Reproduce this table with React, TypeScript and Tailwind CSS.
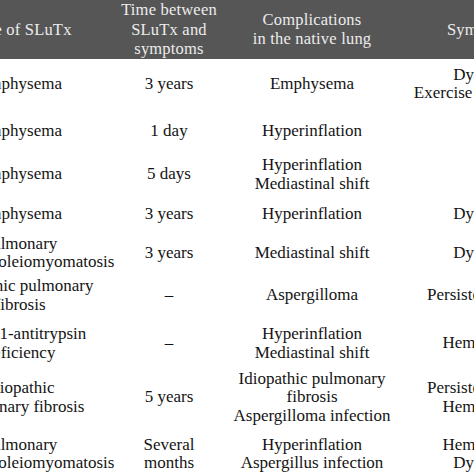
import React from "react";

type Row = { h: string; c: string[][] };

const rows: Row[] = [
  { h: "h-[50px]", c: [["Emphysema"], ["3 years"], ["Emphysema"], ["Dyspnea", "Exercise intolerance"]] },
  { h: "h-[44px]", c: [["Emphysema"], ["1 day"], ["Hyperinflation"], []] },
  { h: "h-[43px]", c: [["Emphysema"], ["5 days"], ["Hyperinflation", "Mediastinal shift"], []] },
  { h: "h-[37px]", c: [["Emphysema"], ["3 years"], ["Hyperinflation"], ["Dyspnea"]] },
  { h: "h-[40px]", c: [["Pulmonary", "lymphangioleiomyomatosis"], ["3 years"], ["Mediastinal shift"], ["Dyspnea"]] },
  { h: "h-[45px]", c: [["Idiopathic pulmonary", "fibrosis"], ["–"], ["Aspergilloma"], ["Persistent cough"]] },
  { h: "h-[51px]", c: [["Alpha 1-antitrypsin", "deficiency"], ["–"], ["Hyperinflation", "Mediastinal shift"], ["Hemoptysis"]] },
  { h: "h-[57px]", c: [["Idiopathic", "pulmonary fibrosis"], ["5 years"], ["Idiopathic pulmonary", "fibrosis", "Aspergilloma infection"], ["Persistent cough", "Hemoptysis"]] },
  { h: "h-[56px]", c: [["Pulmonary", "lymphangioleiomyomatosis"], ["Several", "months"], ["Hyperinflation", "Aspergillus infection"], ["Hemoptysis", "Dyspnea"]] },
];

const header: string[][] = [
  ["Type of SLuTx"],
  ["Time between", "SLuTx and", "symptoms"],
  ["Complications", "in the native lung"],
  ["Symptoms"],
];

function Cell({ lines, head }: { lines: string[]; head?: boolean }) {
  return (
    <div className="flex flex-col items-center justify-center min-w-0">
      {lines.map((l, i) => (
        <div
          key={i}
          className={
            head
              ? "whitespace-nowrap text-[16.5px] leading-[19.5px] text-[#ececec] tracking-[0.2px]"
              : "whitespace-nowrap text-[17px] leading-[18.5px] text-[#141414]"
          }
        >
          {l}
        </div>
      ))}
    </div>
  );
}

export default function App() {
  return (
    <div className="w-[474px] h-[474px] overflow-hidden bg-white font-['Liberation_Serif','Times_New_Roman',serif]">
      <div className="ml-[-80px] w-[640px]">
        <div className="grid grid-cols-[200px_98px_188px_154px] h-[59px] bg-[#565656] pb-[1px]">
          {header.map((l, i) => (
            <Cell key={i} lines={l} head />
          ))}
        </div>
        {rows.map((r, ri) => (
          <div key={ri} className={`grid grid-cols-[200px_98px_188px_154px] ${r.h}`}>
            {r.c.map((l, i) => (
              <Cell key={i} lines={l} />
            ))}
          </div>
        ))}
      </div>
    </div>
  );
}
